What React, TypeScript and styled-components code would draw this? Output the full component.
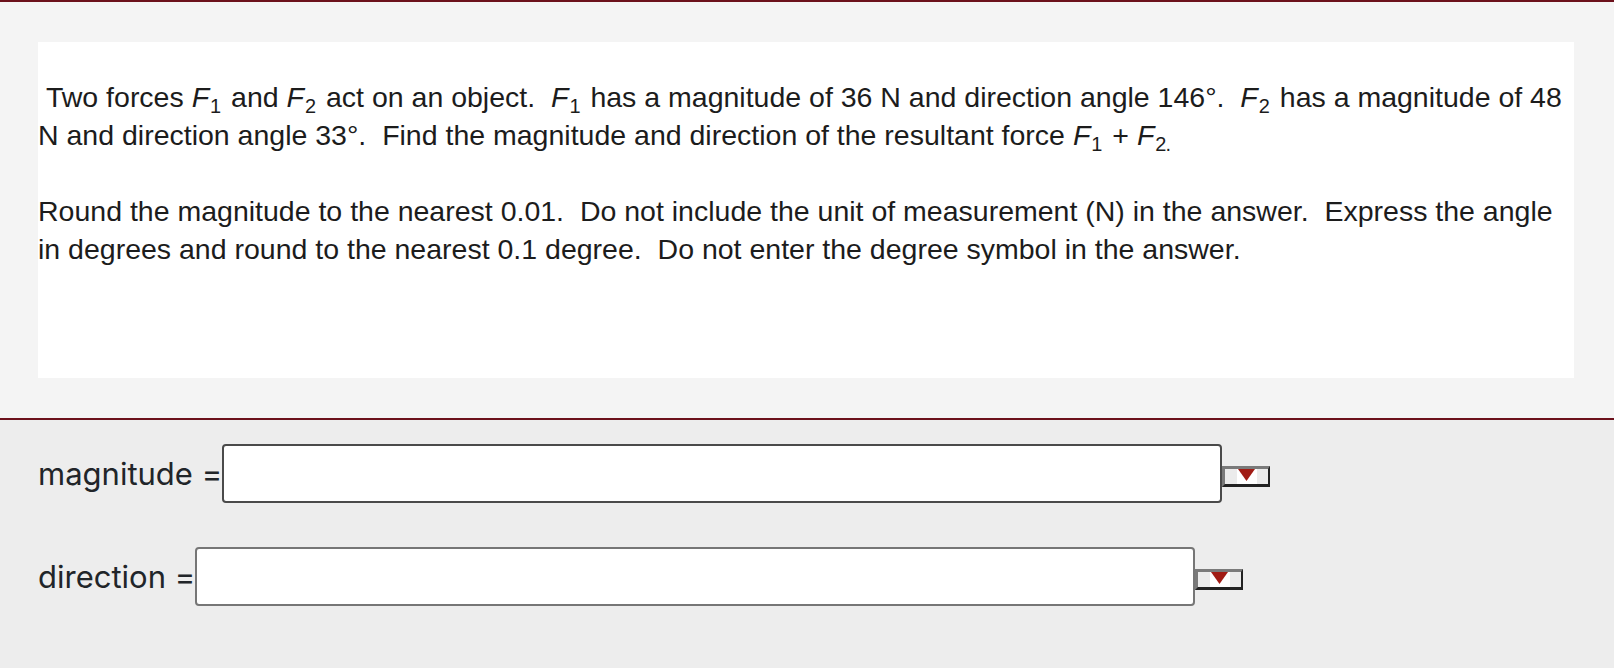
import React from "react";
import styled, { createGlobalStyle } from "styled-components";

const GlobalStyle = createGlobalStyle`
  html, body {
    margin: 0;
    padding: 0;
  }
  body {
    background: #ededed;
  }
`;

const Page = styled.div`
  display: flex;
  flex-direction: column;
  min-height: 100vh;
  box-sizing: border-box;
  border-top: 2px solid #6c111b;
`;

const QuestionArea = styled.section`
  background: #f4f4f4;
  padding: 40px 40px 40px 38px;
  border-bottom: 2px solid #6c111b;
`;

const Prompt = styled.div`
  background: #fff;
  padding: 36px 0 110px 0;
  font-family: "Liberation Sans", Arial, sans-serif;
  font-size: 28.5px;
  line-height: 38px;
  color: #1c1c1c;
`;

const Para = styled.p`
  margin: 0;
  & + & {
    margin-top: 38px;
  }
`;

const Var = styled.i`
  font-style: italic;
  padding-right: 1px;
`;

const Sub = styled.sub<{ $last?: boolean }>`
  font-size: 0.7em;
  line-height: 0;
  vertical-align: -0.3em;
  padding-right: ${(p) => (p.$last ? "0" : "2px")};
  letter-spacing: ${(p) => (p.$last ? "-1px" : "normal")};
`;

const AnswerArea = styled.section`
  flex: 1;
  background: #ededed;
  padding: 24px 38px;
  display: flex;
  flex-direction: column;
  gap: 44px;
`;

const AnswerRow = styled.div`
  display: flex;
  align-items: center;
`;

const Label = styled.label`
  font-family: Inter, "Helvetica Neue", Arial, sans-serif;
  font-size: 31px;
  color: #212529;
  white-space: pre;
`;

const Field = styled.input<{ $dark?: boolean }>`
  box-sizing: border-box;
  width: 1000px;
  height: 59px;
  margin: 0;
  padding: 0 12px;
  border: 2px solid ${(p) => (p.$dark ? "#4a4a4a" : "#767676")};
  border-radius: 4px;
  background: #fff;
  font-family: Inter, Arial, sans-serif;
  font-size: 31px;
  outline: none;
`;

const Toggle = styled.span`
  box-sizing: border-box;
  display: flex;
  justify-content: center;
  width: 48px;
  height: 21px;
  margin-top: 6px;
  background: #ebebeb;
  border-style: solid;
  border-width: 3px 2px 3px 3px;
  border-color: #7a7a7a #222 #222 #7a7a7a;
  cursor: pointer;
`;

const ToggleFace = styled.span`
  display: flex;
  justify-content: center;
  width: 20px;
  background: #fff;
`;

const F = ({ n, tail }: { n: number; tail?: string }) => (
  <>
    <Var>F</Var>
    <Sub $last={!!tail}>
      {n}
      {tail}
    </Sub>
  </>
);

const Dropdown = () => (
  <Toggle>
    <ToggleFace>
      <svg width="17" height="12" viewBox="0 0 17 12">
        <polygon points="0,0 17,0 8.5,12" fill="#a11c15" />
      </svg>
    </ToggleFace>
  </Toggle>
);

const App = () => {
  return (
    <>
      <GlobalStyle />
      <Page>
        <QuestionArea>
          <Prompt>
            <Para>
              {"\u00a0"}Two forces <F n={1} /> and <F n={2} /> act on an object.{"\u00a0 "}
              <F n={1} /> has a magnitude of 36 N and direction angle 146°.{"\u00a0 "}
              <F n={2} /> has a magnitude of 48 N and direction angle 33°.{"\u00a0 "}
              Find the magnitude and direction of the resultant force <F n={1} /> + <F n={2} tail="." />
            </Para>
            <Para>
              Round the magnitude to the nearest 0.01.{"\u00a0 "}Do not include the unit of
              measurement (N) in the answer.{"\u00a0 "}Express the angle in degrees and round to the
              nearest 0.1 degree.{"\u00a0 "}Do not enter the degree symbol in the answer.
            </Para>
          </Prompt>
        </QuestionArea>
        <AnswerArea>
          <AnswerRow>
            <Label htmlFor="magnitude">magnitude =</Label>
            <Field id="magnitude" $dark />
            <Dropdown />
          </AnswerRow>
          <AnswerRow>
            <Label htmlFor="direction">direction =</Label>
            <Field id="direction" />
            <Dropdown />
          </AnswerRow>
        </AnswerArea>
      </Page>
    </>
  );
};

export default App;
